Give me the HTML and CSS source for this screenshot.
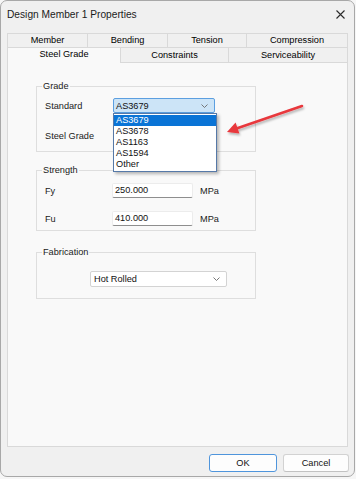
FILE: index.html
```html
<!DOCTYPE html>
<html>
<head>
<meta charset="utf-8">
<link rel="stylesheet" href="styles.css">
</head>
<body>
<div class="window">
  <div class="titlebar">
    <span class="title">Design Member 1 Properties</span>
    <svg class="close" width="9" height="9" viewBox="0 0 9 9"><path d="M0.5 0.5L8.5 8.5M8.5 0.5L0.5 8.5" stroke="#2b2b2b" stroke-width="1.1" fill="none"/></svg>
  </div>
  <div class="tabs">
    <div class="tabrow r1">
      <div class="tab">Member</div>
      <div class="tab">Bending</div>
      <div class="tab">Tension</div>
      <div class="tab">Compression</div>
    </div>
    <div class="tabrow r2">
      <div class="tab sel">Steel Grade</div>
      <div class="tab">Constraints</div>
      <div class="tab">Serviceability</div>
    </div>
  </div>
  <div class="panel">
    <fieldset class="grp">
      <legend>Grade</legend>
      <div class="grp-body grade-body">
        <div class="row">
          <span class="lbl">Standard</span>
          <div class="combo std">
            <span>AS3679</span>
            <svg class="chev" width="7" height="4" viewBox="0 0 7 4"><path d="M0.5 0.5L3.5 3.5L6.5 0.5" stroke="#6a6a6a" fill="none" stroke-width="0.9"/></svg>
            <div class="dropdown">
              <div class="dd-item on">AS3679</div>
              <div class="dd-item">AS3678</div>
              <div class="dd-item">AS1163</div>
              <div class="dd-item">AS1594</div>
              <div class="dd-item">Other</div>
            </div>
          </div>
        </div>
        <div class="row">
          <span class="lbl">Steel Grade</span>
          <div class="combo plain sg"><span></span></div>
        </div>
      </div>
    </fieldset>
    <fieldset class="grp strength">
      <legend>Strength</legend>
      <div class="grp-body strength-body">
        <div class="row">
          <span class="lbl">Fy</span>
          <div class="input">250.000</div>
          <span class="unit">MPa</span>
        </div>
        <div class="row">
          <span class="lbl">Fu</span>
          <div class="input">410.000</div>
          <span class="unit">MPa</span>
        </div>
      </div>
    </fieldset>
    <fieldset class="grp fab">
      <legend>Fabrication</legend>
      <div class="grp-body fab-body">
        <div class="combo plain fabcombo">
          <span>Hot Rolled</span>
          <svg class="chev" width="7" height="4" viewBox="0 0 7 4"><path d="M0.5 0.5L3.5 3.5L6.5 0.5" stroke="#6a6a6a" fill="none" stroke-width="0.9"/></svg>
        </div>
      </div>
    </fieldset>
  </div>
  <div class="buttons">
    <div class="btn ok">OK</div>
    <div class="btn">Cancel</div>
  </div>
  <svg class="arrow" width="90" height="42" viewBox="0 0 90 42">
    <defs>
      <filter id="sh" x="-20%" y="-40%" width="140%" height="180%">
        <feDropShadow dx="1" dy="2" stdDeviation="1.2" flood-color="#000" flood-opacity="0.28"/>
      </filter>
    </defs>
    <g filter="url(#sh)">
      <path d="M81 7L15.5 29.6" stroke="#e8383d" stroke-width="2.6" stroke-linecap="round" fill="none"/>
      <path d="M6 33L18.4 34.6L14.6 23.4Z" fill="#e8383d"/>
    </g>
  </svg>
</div>
</body>
</html>
```
FILE: styles.css
```css
html, body {
  margin: 0;
  padding: 0;
}
body {
  width: 356px;
  height: 479px;
  overflow: hidden;
  background: #f6f6f6;
  font-family: "Liberation Sans", Arial, sans-serif;
  font-size: 9.2px;
  color: #000;
}
.window {
  position: relative;
  box-sizing: border-box;
  width: 355px;
  height: 477px;
  border: 1px solid #a8a8a8;
  border-radius: 7px;
  background: #f0f0f0;
  display: flex;
  flex-direction: column;
  overflow: hidden;
}
.titlebar {
  box-sizing: border-box;
  height: 32px;
  padding: 0 9px 6px 6px;
  display: flex;
  align-items: center;
  justify-content: space-between;
}
.title {
  font-size: 10.2px;
  color: #1b1b1b;
}
.close {
  display: block;
}
.tabs {
  margin: 0 6px;
  width: 341px;
}
.tabrow {
  display: grid;
}
.r1 {
  grid-template-columns: 81px 80px 79px 1fr;
  height: 14px;
}
.r2 {
  grid-template-columns: 114px 108px 1fr;
  height: 16px;
  margin-bottom: -1px;
}
.tab {
  box-sizing: border-box;
  border-top: 1px solid #d9d9d9;
  border-right: 1px solid #d9d9d9;
  background: #f0f0f0;
  display: flex;
  align-items: center;
  justify-content: center;
  padding-bottom: 1px;
}
.tab:first-child {
  border-left: 1px solid #d9d9d9;
}
.tab.sel {
  position: relative;
  z-index: 2;
  background: #f9f9f9;
  padding-bottom: 3px;
}
.panel {
  position: relative;
  box-sizing: border-box;
  margin: 0 6px;
  width: 341px;
  height: 385px;
  background: #f9f9f9;
  border: 1px solid #d9d9d9;
  padding: 17.5px 0 0 28px;
}
.grp {
  margin: 0;
  padding: 0;
  min-width: 0;
  width: 220px;
  box-sizing: border-box;
  border: 1px solid #dedede;
}
.grp legend {
  margin-left: 5px;
  padding: 0 1px;
  line-height: 11px;
  font-size: 9.2px;
  color: #1a1a1a;
}
.strength {
  margin-top: 12.5px;
}
.fab {
  margin-top: 15.5px;
}
.grp-body {
  display: flex;
  flex-direction: column;
  padding-left: 8px;
}
.grade-body {
  padding-top: 6.5px;
  padding-bottom: 8px;
  gap: 15px;
}
.strength-body {
  padding-top: 7.5px;
  padding-bottom: 4px;
  gap: 13px;
}
.fab-body {
  padding: 13.5px 0 11px 53px;
}
.row {
  display: flex;
  align-items: center;
  height: 15px;
}
.lbl {
  width: 68px;
  color: #1a1a1a;
}
.strength .lbl {
  width: 67px;
}
.combo {
  position: relative;
  box-sizing: border-box;
  height: 15px;
  display: flex;
  align-items: center;
  justify-content: space-between;
  padding: 0 6px 0 2px;
  border-radius: 2px;
}
.std {
  width: 102px;
  background: #cce4f7;
  border: 1px solid #5c9fe0;
  color: #111;
}
.plain {
  background: #fff;
  border: 1px solid #d3d3d3;
}
.sg {
  width: 102px;
}
.fabcombo {
  width: 137px;
  height: 16px;
  padding-left: 3px;
  color: #111;
}
.chev {
  display: block;
}
.dropdown {
  position: absolute;
  top: calc(100% + 1px);
  left: -1px;
  z-index: 3;
  box-sizing: border-box;
  width: 104px;
  padding: 1px 0;
  background: #fff;
  border: 1px solid #5679a8;
  box-shadow: 2px 2px 3px rgba(0, 0, 0, 0.28);
}
.dd-item {
  height: 11px;
  line-height: 11px;
  padding-left: 2px;
  color: #111;
}
.dd-item.on {
  background: #0a74d6;
  color: #fff;
}
.input {
  box-sizing: border-box;
  width: 81px;
  height: 15px;
  line-height: 13px;
  padding-left: 2px;
  background: #fff;
  border: 1px solid #ececec;
  border-bottom-color: #8e8e8e;
  border-radius: 2px;
  color: #111;
}
.unit {
  margin-left: 7px;
  color: #1a1a1a;
}
.buttons {
  display: flex;
  justify-content: flex-end;
  gap: 6px;
  padding: 7px 5px 0 0;
}
.btn {
  box-sizing: border-box;
  width: 66px;
  height: 18px;
  display: flex;
  align-items: center;
  justify-content: center;
  background: #fdfdfd;
  border: 1px solid #d2d2d2;
  border-bottom-color: #c2c2c2;
  border-radius: 3px;
  color: #111;
}
.btn.ok {
  width: 68px;
  border: 1px solid #4f95dc;
}
.arrow {
  position: absolute;
  left: 220px;
  top: 98px;
}
```
